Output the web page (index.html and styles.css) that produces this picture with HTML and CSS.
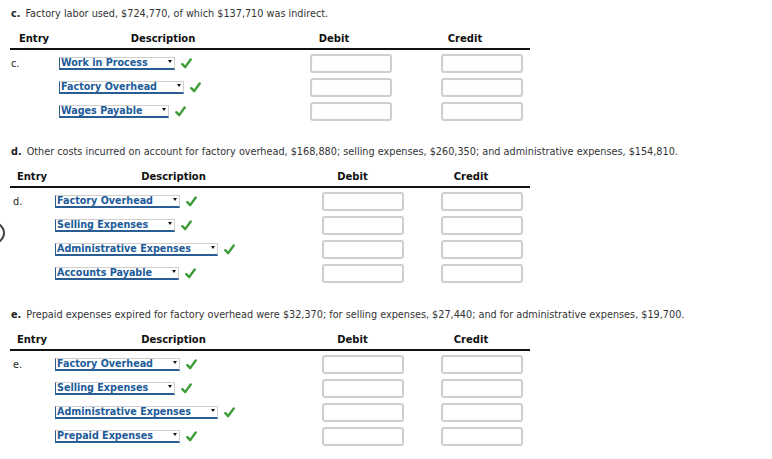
FILE: index.html
```html
<!DOCTYPE html>
<html>
<head>
<meta charset="utf-8">
<link rel="stylesheet" href="styles.css">
</head>
<body>
<div class="page">
  <div class="arc"></div>

  <section class="sec sec-c">
    <p class="prompt"><b class="lbl">c.</b>Factory labor used, $724,770, of which $137,710 was indirect.</p>
    <div class="head">
      <span>Entry</span><span>Description</span><span>Debit</span><span>Credit</span>
    </div>
    <div class="row">
      <span class="entry">c.</span>
      <span class="desc"><span class="sel">Work in Process<i class="arrow"></i></span><svg class="chk" viewBox="0 0 10 10"><path d="M1.2 5.6 L3.8 8.3 L8.8 1.4" /></svg></span>
      <span class="box"></span><span class="box credit"></span>
    </div>
    <div class="row">
      <span class="entry"></span>
      <span class="desc"><span class="sel">Factory Overhead<i class="arrow"></i></span><svg class="chk" viewBox="0 0 10 10"><path d="M1.2 5.6 L3.8 8.3 L8.8 1.4" /></svg></span>
      <span class="box"></span><span class="box credit"></span>
    </div>
    <div class="row">
      <span class="entry"></span>
      <span class="desc"><span class="sel">Wages Payable<i class="arrow"></i></span><svg class="chk" viewBox="0 0 10 10"><path d="M1.2 5.6 L3.8 8.3 L8.8 1.4" /></svg></span>
      <span class="box"></span><span class="box credit"></span>
    </div>
  </section>

  <section class="sec sec-d">
    <p class="prompt"><b class="lbl">d.</b>Other costs incurred on account for factory overhead, $168,880; selling expenses, $260,350; and administrative expenses, $154,810.</p>
    <div class="head">
      <span>Entry</span><span>Description</span><span>Debit</span><span>Credit</span>
    </div>
    <div class="row">
      <span class="entry">d.</span>
      <span class="desc"><span class="sel">Factory Overhead<i class="arrow"></i></span><svg class="chk" viewBox="0 0 10 10"><path d="M1.2 5.6 L3.8 8.3 L8.8 1.4" /></svg></span>
      <span class="box"></span><span class="box credit"></span>
    </div>
    <div class="row">
      <span class="entry"></span>
      <span class="desc"><span class="sel">Selling Expenses<i class="arrow"></i></span><svg class="chk" viewBox="0 0 10 10"><path d="M1.2 5.6 L3.8 8.3 L8.8 1.4" /></svg></span>
      <span class="box"></span><span class="box credit"></span>
    </div>
    <div class="row">
      <span class="entry"></span>
      <span class="desc"><span class="sel">Administrative Expenses<i class="arrow"></i></span><svg class="chk" viewBox="0 0 10 10"><path d="M1.2 5.6 L3.8 8.3 L8.8 1.4" /></svg></span>
      <span class="box"></span><span class="box credit"></span>
    </div>
    <div class="row">
      <span class="entry"></span>
      <span class="desc"><span class="sel">Accounts Payable<i class="arrow"></i></span><svg class="chk" viewBox="0 0 10 10"><path d="M1.2 5.6 L3.8 8.3 L8.8 1.4" /></svg></span>
      <span class="box"></span><span class="box credit"></span>
    </div>
  </section>

  <section class="sec sec-d sec-e">
    <p class="prompt"><b class="lbl">e.</b>Prepaid expenses expired for factory overhead were $32,370; for selling expenses, $27,440; and for administrative expenses, $19,700.</p>
    <div class="head">
      <span>Entry</span><span>Description</span><span>Debit</span><span>Credit</span>
    </div>
    <div class="row">
      <span class="entry">e.</span>
      <span class="desc"><span class="sel">Factory Overhead<i class="arrow"></i></span><svg class="chk" viewBox="0 0 10 10"><path d="M1.2 5.6 L3.8 8.3 L8.8 1.4" /></svg></span>
      <span class="box"></span><span class="box credit"></span>
    </div>
    <div class="row">
      <span class="entry"></span>
      <span class="desc"><span class="sel">Selling Expenses<i class="arrow"></i></span><svg class="chk" viewBox="0 0 10 10"><path d="M1.2 5.6 L3.8 8.3 L8.8 1.4" /></svg></span>
      <span class="box"></span><span class="box credit"></span>
    </div>
    <div class="row">
      <span class="entry"></span>
      <span class="desc"><span class="sel">Administrative Expenses<i class="arrow"></i></span><svg class="chk" viewBox="0 0 10 10"><path d="M1.2 5.6 L3.8 8.3 L8.8 1.4" /></svg></span>
      <span class="box"></span><span class="box credit"></span>
    </div>
    <div class="row">
      <span class="entry"></span>
      <span class="desc"><span class="sel">Prepaid Expenses<i class="arrow"></i></span><svg class="chk" viewBox="0 0 10 10"><path d="M1.2 5.6 L3.8 8.3 L8.8 1.4" /></svg></span>
      <span class="box"></span><span class="box credit"></span>
    </div>
  </section>
</div>
</body>
</html>
```

FILE: styles.css
```css
html, body {
  margin: 0;
  padding: 0;
  background: #fff;
}
body {
  font-family: "DejaVu Sans", Verdana, sans-serif;
  font-size: 9.7px;
  color: #333;
}
.page {
  position: relative;
  width: 772px;
  height: 459px;
  overflow: hidden;
  padding-top: 6px;
  box-sizing: border-box;
}
.arc {
  position: absolute;
  left: -17px;
  top: 222px;
  width: 18px;
  height: 18px;
  border: 2px solid #444;
  border-radius: 50%;
}
.sec {
  margin-left: 10px;
  width: 520px;
}
.sec-d {
  margin-top: 21px;
}
.sec-e {
  margin-top: 22px;
}
.prompt {
  margin: 0;
  padding-left: 1px;
  height: 16px;
  line-height: 16px;
  white-space: nowrap;
  color: #333;
}
.lbl {
  color: #222;
  margin-right: 5px;
}
.head {
  display: grid;
  margin-top: 8px;
  height: 18px;
  line-height: 17px;
  font-size: 10px;
  font-weight: bold;
  color: #111;
  text-align: center;
  border-bottom: 2px solid #111;
}
.sec-c .head {
  grid-template-columns: 48px 210px 132px 130px;
}
.sec-d .head {
  grid-template-columns: 44px 239px 119px 118px;
}
.row {
  display: flex;
  align-items: center;
  height: 24px;
}
.head + .row {
  margin-top: 1px;
}
.entry {
  color: #222;
  padding-left: 1px;
  width: 48px;
}
.sec-d .entry {
  padding-left: 3px;
  width: 42px;
}
.desc {
  display: flex;
  align-items: center;
  width: 251px;
}
.sec-d .desc {
  width: 267px;
}
.sel {
  position: relative;
  display: inline-block;
  font-weight: bold;
  font-size: 9.6px;
  color: #1c5b99;
  line-height: 10px;
  height: 10px;
  padding: 0 26px 0 1px;
  border: 1px solid #cfcfcf;
  border-left-color: #2a5e92;
  border-bottom: 2px solid #2a5e92;
}
.arrow {
  position: absolute;
  right: 2px;
  top: 2px;
  width: 0;
  height: 0;
  border-left: 2.5px solid transparent;
  border-right: 2.5px solid transparent;
  border-top: 3px solid #111;
}
.chk {
  width: 11px;
  height: 11px;
  margin-left: 6px;
  fill: none;
  stroke: #3d9c38;
  stroke-width: 2.2;
  stroke-linecap: round;
  stroke-linejoin: round;
}
.box {
  display: inline-block;
  width: 78px;
  height: 15px;
  border: 2px solid #cfcfcf;
  border-radius: 3px;
  background: #fff;
  box-shadow: inset 0 0 1px #e5e5e5;
}
.credit {
  margin-left: 49px;
}
.sec-d .credit {
  margin-left: 37px;
}
```
